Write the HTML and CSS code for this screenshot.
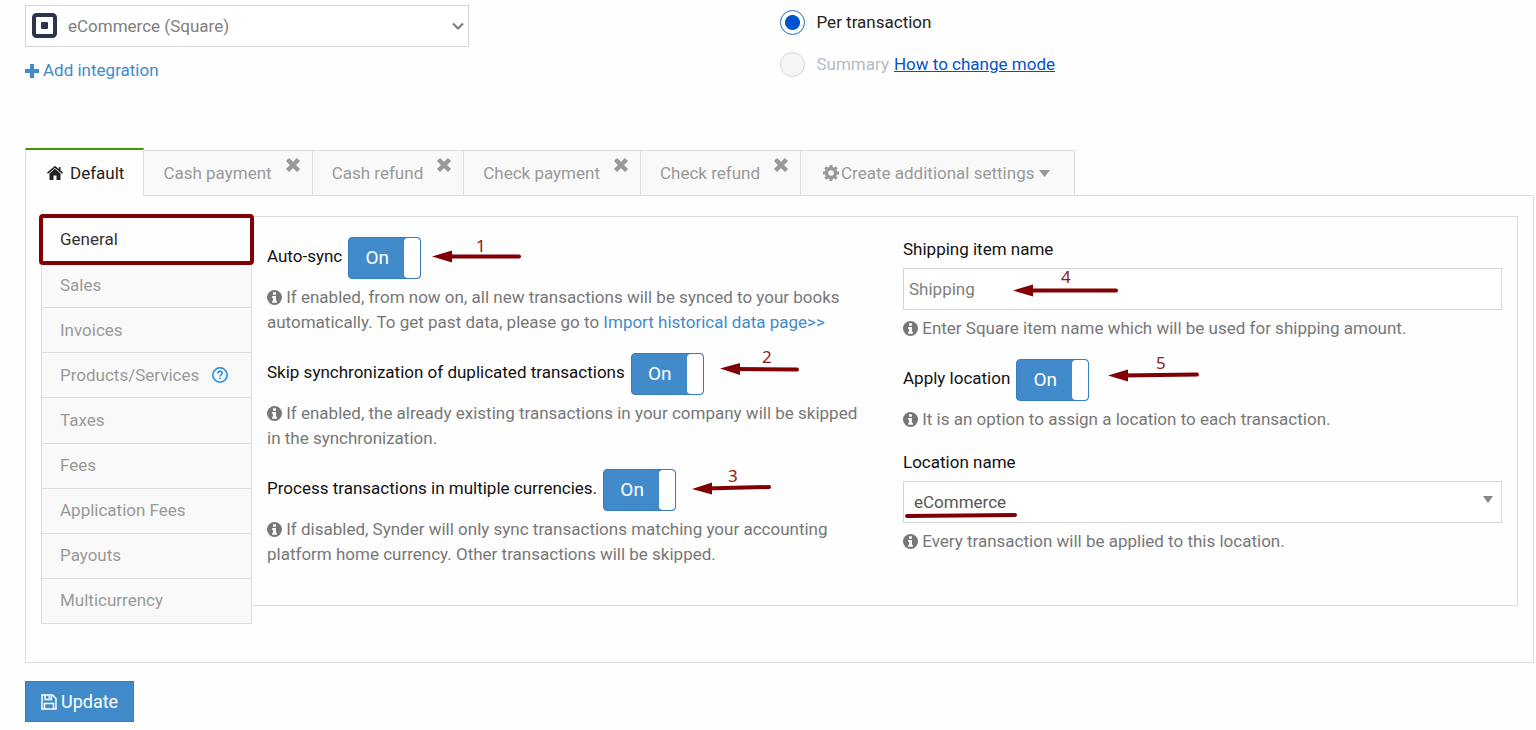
FILE: index.html
```
<!DOCTYPE html>
<html lang="en">
<head>
<meta charset="utf-8">
<title>Integration settings</title>
<meta name="viewport" content="width=device-width, initial-scale=1">
<link rel="stylesheet" href="styles.css">
</head>
<body>
<svg class="defs" width="0" height="0" aria-hidden="true">
  <symbol id="info" viewBox="0 0 16 16"><circle cx="8" cy="8" r="8" fill="currentColor"/><path d="M6.500 2.500h3v2.500h-3zM5.500 6.500h4v5h1v2h-5v-2h1v-3h-1z" fill="#fff"/></symbol>
  <symbol id="close" viewBox="0 0 16 16"><path d="M2.500 2.500l11 11M13.500 2.500l-11 11" stroke="currentColor" stroke-width="4.400" fill="none"/></symbol>
</svg>

<form class="page">
  <div class="top">
    <div class="source">
      <div class="picker">
        <svg class="square-logo" viewBox="0 0 25 25" aria-hidden="true"><rect x="2" y="2" width="21" height="21" rx="2.500" fill="#fff" stroke="#2b364d" stroke-width="4"/><rect x="9" y="9" width="7" height="7" rx="1" fill="#2b364d"/></svg>
        <select class="picker-select" aria-label="Integration"><option>eCommerce (Square)</option></select>
        <svg class="chevron" viewBox="0 0 12 8" aria-hidden="true"><path d="M1 1.500l5 5 5-5" fill="none" stroke="#777" stroke-width="2"/></svg>
      </div>
      <a class="add-link" href="#add"><svg class="plus" viewBox="0 0 14 14" aria-hidden="true"><path d="M7 0v14M0 7h14" stroke="currentColor" stroke-width="4"/></svg>Add integration</a>
    </div>
    <div class="modes">
      <div class="mode"><input class="radio" type="radio" name="mode" id="per" checked><label for="per">Per transaction</label></div>
      <div class="mode"><input class="radio" type="radio" name="mode" id="summary" disabled><label class="muted" for="summary">Summary</label><a class="mode-link" href="#mode">How to change mode</a></div>
    </div>
  </div>

  <div class="tabs">
    <div class="tab tab-active"><button class="tab-btn" type="button"><svg class="home" viewBox="0 0 16 14" aria-hidden="true"><path d="M8 2.800l5.500 4.700V14H9.500V9.500h-3V14H2.500V7.500z" fill="currentColor"/><path d="M.5 7.200L8 .900l7.500 6.300M12.700 1v4" fill="none" stroke="currentColor" stroke-width="1.600"/></svg>Default</button></div>
    <div class="tab"><button class="tab-btn" type="button">Cash payment</button><button class="tab-close" type="button" aria-label="Remove Cash payment"><svg viewBox="0 0 16 16"><use href="#close"/></svg></button></div>
    <div class="tab"><button class="tab-btn" type="button">Cash refund</button><button class="tab-close" type="button" aria-label="Remove Cash refund"><svg viewBox="0 0 16 16"><use href="#close"/></svg></button></div>
    <div class="tab"><button class="tab-btn" type="button">Check payment</button><button class="tab-close" type="button" aria-label="Remove Check payment"><svg viewBox="0 0 16 16"><use href="#close"/></svg></button></div>
    <div class="tab"><button class="tab-btn" type="button">Check refund</button><button class="tab-close" type="button" aria-label="Remove Check refund"><svg viewBox="0 0 16 16"><use href="#close"/></svg></button></div>
    <div class="tab tab-create"><button class="tab-btn" type="button"><svg class="gear" viewBox="0 0 16 16" aria-hidden="true"><circle cx="8" cy="8" r="4.500" fill="none" stroke="currentColor" stroke-width="3.400"/><path d="M8 0v3M8 13v3M0 8h3M13 8h3M2.300 2.300l2.200 2.200M11.500 11.500l2.200 2.200M2.300 13.700l2.200-2.200M11.500 4.500l2.200-2.200" stroke="currentColor" stroke-width="3"/></svg>Create additional settings<svg class="caret" viewBox="0 0 11 7" aria-hidden="true"><path d="M0 0h11L5.500 7z" fill="currentColor"/></svg></button></div>
  </div>

  <div class="panel">
    <nav class="side">
      <a class="side-item side-active" href="#general">General</a>
      <a class="side-item" href="#sales">Sales</a>
      <a class="side-item" href="#invoices">Invoices</a>
      <a class="side-item" href="#products">Products/Services<svg class="question" viewBox="0 0 16 16" aria-hidden="true"><circle cx="8" cy="8" r="7.200" fill="none" stroke="#1589ee" stroke-width="1.500"/><path d="M5.900 6.400c0-1.300.9-2.100 2.100-2.100s2.100.8 2.100 1.900c0 1.500-2.100 1.600-2.100 3.300M8 10.700v1.600" fill="none" stroke="#1589ee" stroke-width="1.500"/></svg></a>
      <a class="side-item" href="#taxes">Taxes</a>
      <a class="side-item" href="#fees">Fees</a>
      <a class="side-item" href="#appfees">Application Fees</a>
      <a class="side-item" href="#payouts">Payouts</a>
      <a class="side-item" href="#multicurrency">Multicurrency</a>
    </nav>

    <div class="content">
      <div class="column">
        <div class="field">
          <div class="row">
            <label class="row-label" for="autosync">Auto-sync</label>
            <span class="toggle"><input class="toggle-input" type="checkbox" id="autosync" checked><span class="toggle-text">On</span></span>
            <svg class="mark" width="90" height="36" viewBox="0 0 90 36"><path d="M14 19.500H87" class="mark-line"/><path d="M0 19.500L20 13.500v12z" class="mark-head"/><text x="44" y="15" class="mark-text">1</text></svg>
          </div>
          <p class="help"><svg class="info"><use href="#info"/></svg> If enabled, from now on, all new transactions will be synced to your books automatically. To get past data, please go to <a class="help-link" href="#import">Import historical data page&gt;&gt;</a></p>
        </div>
        <div class="field">
          <div class="row">
            <label class="row-label" for="skip">Skip synchronization of duplicated transactions</label>
            <span class="toggle"><input class="toggle-input" type="checkbox" id="skip" checked><span class="toggle-text">On</span></span>
            <svg class="mark mark-gap" width="80" height="36" viewBox="0 0 80 36"><path d="M14 16L77 16.500" class="mark-line"/><path d="M0 15.500L20 10v12z" class="mark-head"/><text x="42" y="10" class="mark-text">2</text></svg>
          </div>
          <p class="help"><svg class="info"><use href="#info"/></svg> If enabled, the already existing transactions in your company will be skipped in the synchronization.</p>
        </div>
        <div class="field">
          <div class="row">
            <label class="row-label" for="multi">Process transactions in multiple currencies.</label>
            <span class="toggle"><input class="toggle-input" type="checkbox" id="multi" checked><span class="toggle-text">On</span></span>
            <svg class="mark mark-gap" width="80" height="36" viewBox="0 0 80 36"><path d="M14 19.500L77 18" class="mark-line"/><path d="M0 20L20 13.500v12z" class="mark-head"/><text x="36" y="13" class="mark-text">3</text></svg>
          </div>
          <p class="help"><svg class="info"><use href="#info"/></svg> If disabled, Synder will only sync transactions matching your accounting platform home currency. Other transactions will be skipped.</p>
        </div>
      </div>

      <div class="column">
        <div class="field">
          <label class="field-label" for="ship">Shipping item name</label>
          <div class="control">
            <input class="text-input" type="text" id="ship" value="Shipping">
            <svg class="mark mark-input" width="106" height="40" viewBox="0 0 106 40"><path d="M14 22.500H103" class="mark-line"/><path d="M0 22.500L20 16.500v12z" class="mark-head"/><text x="48" y="15" class="mark-text">4</text></svg>
          </div>
          <p class="help"><svg class="info"><use href="#info"/></svg> Enter Square item name which will be used for shipping amount.</p>
        </div>
        <div class="field">
          <div class="row">
            <label class="row-label" for="apply">Apply location</label>
            <span class="toggle"><input class="toggle-input" type="checkbox" id="apply" checked><span class="toggle-text">On</span></span>
            <svg class="mark mark-far" width="92" height="36" viewBox="0 0 92 36"><path d="M14 16.500L89 15.500" class="mark-line"/><path d="M0 16.500L20 10.500v12z" class="mark-head"/><text x="48" y="10" class="mark-text">5</text></svg>
          </div>
          <p class="help"><svg class="info"><use href="#info"/></svg> It is an option to assign a location to each transaction.</p>
        </div>
        <div class="field">
          <label class="field-label" for="location">Location name</label>
          <div class="control">
            <select class="location-select" id="location"><option>eCommerce</option></select>
            <svg class="location-caret" viewBox="0 0 10 7" aria-hidden="true"><path d="M0 0h10L5 7z" fill="#888"/></svg>
            <svg class="mark mark-underline" width="114" height="8" viewBox="0 0 114 8"><path d="M3 5L111 4" class="mark-line"/></svg>
          </div>
          <p class="help"><svg class="info"><use href="#info"/></svg> Every transaction will be applied to this location.</p>
        </div>
      </div>
    </div>
  </div>

  <button class="update" type="button"><svg class="floppy" viewBox="0 0 16 16" aria-hidden="true"><path d="M1 1h10.500L15 4.500V15H1zM4 1v4.500h6.500V1M3.500 15V9.500h9V15M8.300 2v2.500" fill="none" stroke="currentColor" stroke-width="1.500"/></svg>Update</button>
</form>
</body>
</html>
```
FILE: styles.css
```
* { box-sizing: border-box; }
body {
  margin: 0;
  background: #fefefe;
  color: #111;
  font: 17px/25px Roboto, "Liberation Sans", sans-serif;
}
button, input, select { font: inherit; color: inherit; margin: 0; }
button { cursor: pointer; }
a { text-decoration: none; }
.defs { position: absolute; }
.page { padding: 5px 2px 8px 25px; }

/* Integration picker and sync mode */
.top { display: grid; grid-template-columns: 1fr 1fr; min-height: 143px; align-items: start; }
.source { display: flex; flex-direction: column; align-items: flex-start; gap: 11px; }
.picker { position: relative; width: 444px; max-width: 100%; }
.picker-select {
  appearance: none;
  display: block;
  width: 100%;
  height: 42px;
  padding: 0 32px 0 42px;
  border: 1px solid #d5d5d5;
  border-radius: 0;
  background: #fff;
  color: #808080;
}
.square-logo { position: absolute; left: 7px; top: 8px; width: 25px; height: 25px; pointer-events: none; }
.chevron { position: absolute; right: 5px; top: 17px; width: 12px; height: 8px; pointer-events: none; }
.add-link { display: flex; align-items: center; gap: 4px; color: #428bca; }
.plus { width: 14px; height: 14px; }
.modes { display: flex; flex-direction: column; gap: 17px; padding-top: 5px; }
.mode { display: flex; align-items: center; gap: 5px; color: #222; }
.radio {
  appearance: none;
  width: 25px;
  height: 25px;
  margin-right: 7px;
  border: 1px solid #1f6fc5;
  border-radius: 50%;
  background: #fff;
}
.radio:checked { background: radial-gradient(circle, #0052cc 7px, #fff 8px); }
.radio:disabled { border-color: #d5d5d5; background: #f5f5f5; }
.muted { color: #b3bcc5; }
.mode-link { color: #0052cc; text-decoration: underline; }

/* Tabs */
.tabs { display: flex; align-items: flex-end; margin-bottom: -1px; position: relative; }
.tab {
  display: flex;
  align-items: flex-start;
  height: 46px;
  padding: 0 11px 0 19px;
  border: 1px solid #ddd;
  border-left: 0;
  background: #f9f9f9;
  color: #999;
}
.tab-btn { display: flex; align-items: center; height: 44px; padding: 0; border: 0; background: none; white-space: nowrap; }
.tab-close { margin-left: 13px; padding: 6px 0 0; border: 0; background: none; line-height: 0; }
.tab-close svg { width: 16px; height: 16px; }
.tab-active {
  height: 48px;
  padding: 0 19px 0 21px;
  border: 1px solid #ddd;
  border-top: 2px solid #419502;
  border-bottom: 0;
  background: #fefefe;
  color: #222;
}
.tab-active .tab-btn { height: 46px; }
.home { width: 16px; height: 14px; margin-right: 7px; }
.tab-create { padding: 0 24px 0 22px; }
.gear { width: 16px; height: 16px; margin-right: 2px; }
.caret { width: 11px; height: 7px; margin-left: 5px; }

/* Settings panel */
.panel { display: flex; align-items: flex-start; padding: 20px 15px 38px; border: 1px solid #ddd; }
.side {
  position: relative;
  z-index: 1;
  display: flex;
  flex-direction: column;
  flex: none;
  width: 211px;
  min-height: 408px;
  margin-right: -1px;
  border: 1px solid #ddd;
  background: #f9f9f9;
}
.side-item { display: flex; flex: 1 0 44px; align-items: center; padding-left: 18px; color: #999; }
.side-item + .side-item { border-top: 1px solid #ddd; }
.side-active {
  position: relative;
  z-index: 1;
  color: #333;
  background: #fefefe;
  outline: 4px solid #800006;
  outline-offset: -1px;
  border-radius: 1px;
}
.question { width: 16px; height: 16px; margin-left: 13px; }
.content {
  flex: 1;
  display: grid;
  grid-template-columns: 1fr 1fr;
  gap: 37px;
  padding: 20px 15px 38px;
  border: 1px solid #ddd;
}
.column { display: flex; flex-direction: column; gap: 18px; min-width: 0; }
.field { display: flex; flex-direction: column; gap: 6px; }
.row { display: flex; align-items: flex-start; }
.row-label { margin-right: 6px; line-height: 38px; }
.help { margin: 0; color: #777; }
.info { width: 15px; height: 15px; vertical-align: -2px; }
.help-link { color: #428bca; }
.toggle {
  position: relative;
  flex: none;
  width: 73px;
  height: 42px;
  padding-right: 15px;
  border: 1px solid #357ebd;
  border-radius: 4px;
  background: #428bca;
  color: #fff;
  font-size: 19px;
  line-height: 40px;
  text-align: center;
}
.toggle-text { display: block; }
.toggle-input {
  appearance: none;
  position: absolute;
  top: 0;
  right: 0;
  width: 16px;
  height: 40px;
  border-radius: 4px;
  background: #fff;
}
.control { position: relative; }
.text-input, .location-select {
  appearance: none;
  display: block;
  width: 100%;
  height: 42px;
  padding: 0 5px;
  border: 1px solid #d5d5d5;
  border-radius: 0;
  background: #fff;
  color: #808080;
}
.location-select { padding: 0 30px 0 10px; color: #555; }
.location-caret { position: absolute; right: 9px; top: 15px; width: 10px; height: 7px; pointer-events: none; }

/* Hand-drawn callouts */
.mark { flex: none; margin-left: 11px; overflow: visible; pointer-events: none; }
.mark-gap { margin-left: 16px; }
.mark-far { margin-left: 19px; }
.mark-input { position: absolute; left: 110px; top: 0; margin: 0; }
.mark-underline { position: absolute; left: 1px; bottom: 4px; margin: 0; }
.mark-line { fill: none; stroke: #800006; stroke-width: 4px; stroke-linecap: round; }
.mark-head { fill: #800006; }
.mark-text { fill: #8d1a1f; font: 17px "Noto Sans", sans-serif; }

.update {
  display: flex;
  align-items: center;
  gap: 4px;
  height: 41px;
  margin-top: 18px;
  padding: 0 15px;
  border: 1px solid #357ebd;
  background: #428bca;
  color: #fff;
  font-size: 18px;
}
.floppy { width: 16px; height: 16px; }
```
